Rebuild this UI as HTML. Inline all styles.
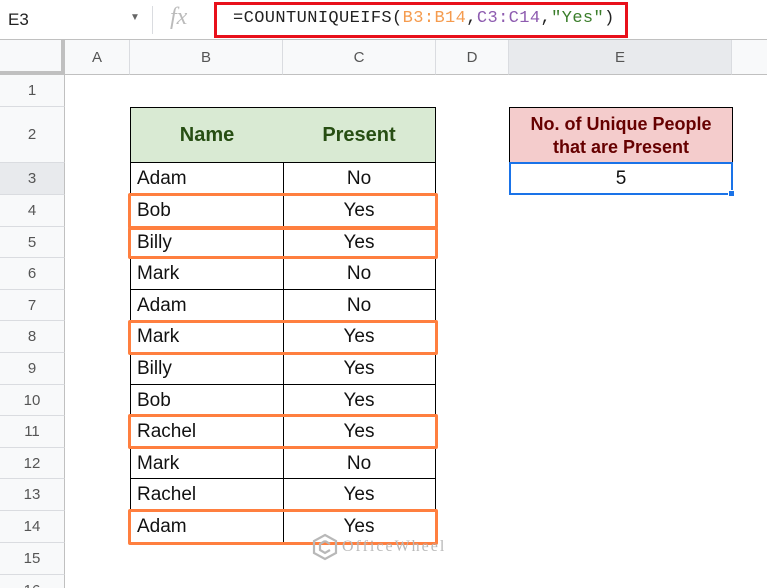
<!DOCTYPE html><html><head><style>
body{margin:0;width:767px;height:588px;overflow:hidden;background:#fff;font-family:"Liberation Sans",Arial,sans-serif;position:relative}
div{position:absolute;box-sizing:border-box}
.rh{left:0;width:65px;background:#f8f9fa;border-right:1px solid #c0c0c0;border-bottom:1px solid #dadce0;text-align:center;color:#555;font-size:15px}
.ch{top:40px;height:35px;background:#f8f9fa;border-right:1px solid #dadce0;border-bottom:1px solid #c0c0c0;text-align:center;line-height:35px;color:#555;font-size:15px}
.c{border-right:1px solid #000;border-bottom:1px solid #000;font-size:19px;color:#111}
.o{border:3px solid #ff7f3f;border-radius:2px;left:128px;width:310px}
</style></head><body>
<div style="left:0;top:0;width:767px;height:40px;border-bottom:1px solid #c0c0c0;background:#fff"></div>
<div style="left:8px;top:10px;font-size:17px;color:#222">E3</div>
<div style="left:130px;top:12px;font-size:10px;color:#666">▼</div>
<div style="left:152px;top:6px;width:1px;height:28px;background:#dadce0"></div>
<div style="left:170px;top:4px;font-size:24px;font-style:italic;color:#bbb;font-family:'Liberation Serif',serif">fx</div>
<div style="left:214px;top:2px;width:414px;height:36px;border:3px solid #e8101b"></div>
<div style="left:233px;top:9px;font-size:17px;color:#222;font-family:'Liberation Mono',monospace;letter-spacing:0.4px;white-space:nowrap">=COUNTUNIQUEIFS(<span style="color:#f59b4e">B3:B14</span>,<span style="color:#8e5cb0">C3:C14</span>,<span style="color:#3a7d2a">"Yes"</span>)</div>
<div style="left:0;top:40px;width:65px;height:35px;background:#f8f9fa;border-right:4px solid #c0c0c0;border-bottom:4px solid #c0c0c0"></div>
<div class="ch" style="left:65px;width:65px">A</div>
<div class="ch" style="left:130px;width:153px">B</div>
<div class="ch" style="left:283px;width:153px">C</div>
<div class="ch" style="left:436px;width:73px">D</div>
<div class="ch" style="left:509px;width:223px;background:#e8eaed">E</div>
<div class="ch" style="left:732px;width:40px"></div>
<div class="rh" style="top:75px;height:32px;line-height:32px">1</div>
<div class="rh" style="top:107px;height:56px;line-height:56px">2</div>
<div class="rh" style="top:163px;height:32px;line-height:32px;background:#e8eaed">3</div>
<div class="rh" style="top:195px;height:31.6px;line-height:31px">4</div>
<div class="rh" style="top:226.6px;height:31.6px;line-height:31px">5</div>
<div class="rh" style="top:258.2px;height:31.6px;line-height:31px">6</div>
<div class="rh" style="top:289.8px;height:31.6px;line-height:31px">7</div>
<div class="rh" style="top:321.4px;height:31.6px;line-height:31px">8</div>
<div class="rh" style="top:353px;height:31.6px;line-height:31px">9</div>
<div class="rh" style="top:384.6px;height:31.6px;line-height:31px">10</div>
<div class="rh" style="top:416.2px;height:31.6px;line-height:31px">11</div>
<div class="rh" style="top:447.8px;height:31.6px;line-height:31px">12</div>
<div class="rh" style="top:479.4px;height:31.6px;line-height:31px">13</div>
<div class="rh" style="top:511px;height:32px;line-height:32px">14</div>
<div class="rh" style="top:543px;height:32px;line-height:32px">15</div>
<div class="rh" style="top:575px;height:13px;line-height:32px;overflow:hidden;border-bottom:none">16</div>
<div style="left:130px;top:107px;width:306px;height:437px;border-left:1px solid #000;border-top:1px solid #000"></div>
<div class="c" style="left:130px;top:107px;width:154px;height:56px;background:#d9ead3;border-left:1px solid #000;border-top:1px solid #000;text-align:center;line-height:54px;font-weight:bold;font-size:20px;color:#274e13">Name</div>
<div class="c" style="left:283px;top:107px;width:153px;height:56px;background:#d9ead3;border-top:1px solid #000;text-align:center;line-height:54px;font-weight:bold;font-size:20px;color:#274e13">Present</div>
<div class="c" style="left:130px;top:163px;width:154px;height:32px;border-left:1px solid #000;padding-left:6px;line-height:32px">Adam</div><div class="c" style="left:283px;top:163px;width:153px;height:32px;text-align:center;line-height:32px">No</div>
<div class="c" style="left:130px;top:195px;width:154px;height:31.6px;border-left:1px solid #000;padding-left:6px;line-height:31px">Bob</div><div class="c" style="left:283px;top:195px;width:153px;height:31.6px;text-align:center;line-height:31px">Yes</div>
<div class="c" style="left:130px;top:226.6px;width:154px;height:31.6px;border-left:1px solid #000;padding-left:6px;line-height:31px">Billy</div><div class="c" style="left:283px;top:226.6px;width:153px;height:31.6px;text-align:center;line-height:31px">Yes</div>
<div class="c" style="left:130px;top:258.2px;width:154px;height:31.6px;border-left:1px solid #000;padding-left:6px;line-height:31px">Mark</div><div class="c" style="left:283px;top:258.2px;width:153px;height:31.6px;text-align:center;line-height:31px">No</div>
<div class="c" style="left:130px;top:289.8px;width:154px;height:31.6px;border-left:1px solid #000;padding-left:6px;line-height:31px">Adam</div><div class="c" style="left:283px;top:289.8px;width:153px;height:31.6px;text-align:center;line-height:31px">No</div>
<div class="c" style="left:130px;top:321.4px;width:154px;height:31.6px;border-left:1px solid #000;padding-left:6px;line-height:31px">Mark</div><div class="c" style="left:283px;top:321.4px;width:153px;height:31.6px;text-align:center;line-height:31px">Yes</div>
<div class="c" style="left:130px;top:353px;width:154px;height:31.6px;border-left:1px solid #000;padding-left:6px;line-height:31px">Billy</div><div class="c" style="left:283px;top:353px;width:153px;height:31.6px;text-align:center;line-height:31px">Yes</div>
<div class="c" style="left:130px;top:384.6px;width:154px;height:31.6px;border-left:1px solid #000;padding-left:6px;line-height:31px">Bob</div><div class="c" style="left:283px;top:384.6px;width:153px;height:31.6px;text-align:center;line-height:31px">Yes</div>
<div class="c" style="left:130px;top:416.2px;width:154px;height:31.6px;border-left:1px solid #000;padding-left:6px;line-height:31px">Rachel</div><div class="c" style="left:283px;top:416.2px;width:153px;height:31.6px;text-align:center;line-height:31px">Yes</div>
<div class="c" style="left:130px;top:447.8px;width:154px;height:31.6px;border-left:1px solid #000;padding-left:6px;line-height:31px">Mark</div><div class="c" style="left:283px;top:447.8px;width:153px;height:31.6px;text-align:center;line-height:31px">No</div>
<div class="c" style="left:130px;top:479.4px;width:154px;height:31.6px;border-left:1px solid #000;padding-left:6px;line-height:31px">Rachel</div><div class="c" style="left:283px;top:479.4px;width:153px;height:31.6px;text-align:center;line-height:31px">Yes</div>
<div class="c" style="left:130px;top:511px;width:154px;height:32px;border-left:1px solid #000;padding-left:6px;line-height:32px">Adam</div><div class="c" style="left:283px;top:511px;width:153px;height:32px;text-align:center;line-height:32px">Yes</div>
<div class="o" style="top:193px;height:36px"></div>
<div class="o" style="top:227px;height:32px"></div>
<div class="o" style="top:320px;height:35px"></div>
<div class="o" style="top:414px;height:35px"></div>
<div class="o" style="top:509px;height:36px"></div>
<div style="left:312px;top:538px;font-size:16px;color:#b8b8b8;letter-spacing:2px;font-family:'Liberation Serif',serif;padding-left:30px;white-space:nowrap"><svg style="position:absolute;left:0;top:-5px" width="26" height="28" viewBox="0 0 26 28"><path d="M13 2 L24 8 L24 20 L13 26 L2 20 L2 8 Z M13 8 L18 11 M13 8 L8 11 L8 17 L13 20 L18 17" fill="none" stroke="#b8b8b8" stroke-width="2.2"/></svg>OfficeWheel</div>
<div style="left:509px;top:107px;width:224px;height:57px;background:#f4cccc;border:1px solid #000;text-align:center;font-weight:bold;font-size:18px;color:#660000;line-height:23px;padding-top:5px">No. of Unique People<br>that are Present</div>
<div style="left:509px;top:162px;width:224px;height:33px;border:2px solid #1a73e8;text-align:center;font-size:19px;line-height:29px;color:#111">5</div>
<div style="left:728px;top:190px;width:7px;height:7px;background:#1a73e8;border:1px solid #fff"></div>
</body></html>
